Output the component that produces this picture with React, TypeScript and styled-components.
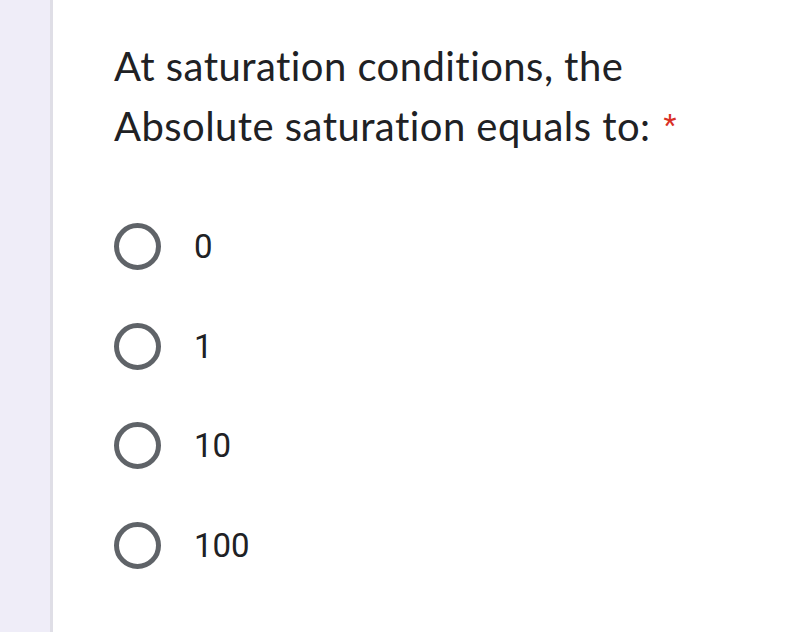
import React from "react";
import styled, { createGlobalStyle } from "styled-components";

const Global = createGlobalStyle`
  html, body { margin: 0; padding: 0; background: #ffffff; }
  #root { height: 632px; }
`;

const Page = styled.div`
  display: flex;
  width: 800px;
  height: 632px;
  overflow: hidden;
`;

const SideStrip = styled.div`
  width: 50px;
  flex: none;
  background: #efedf8;
  border-right: 3px solid #dfdee6;
`;

const Card = styled.div`
  flex: 1;
  background: #ffffff;
  padding: 36px 0 0 61px;
  display: flex;
  flex-direction: column;
`;

const Title = styled.div`
  font-family: Lato, "Open Sans", sans-serif;
  font-size: 40px;
  line-height: 60px;
  letter-spacing: 0.45px;
  font-variant-ligatures: none;
  color: #202124;
  width: 600px;
`;

const Required = styled.span`
  font-family: Roboto, "Liberation Sans", sans-serif;
  color: #d93025;
  font-size: 30px;
  line-height: 0;
  margin-left: 13px;
  vertical-align: 6px;
`;

const Options = styled.div`
  margin-top: 41px;
  display: flex;
  flex-direction: column;
`;

const Option = styled.label`
  display: flex;
  align-items: center;
  height: 99.5px;
`;

const Radio = styled.span`
  box-sizing: border-box;
  width: 47px;
  height: 47px;
  border-radius: 50%;
  border: 5px solid #5f6368;
  flex: none;
`;

const Label = styled.span`
  font-family: Roboto, "Liberation Sans", sans-serif;
  font-size: 33px;
  color: #202124;
  margin-left: 33px;
`;

const options = ["0", "1", "10", "100"];

export default function App() {
  return (
    <>
      <Global />
      <Page>
        <SideStrip />
        <Card>
          <Title>
            At saturation conditions, the Absolute saturation equals to:
            <Required>*</Required>
          </Title>
          <Options>
            {options.map((o) => (
              <Option key={o}>
                <Radio />
                <Label>{o}</Label>
              </Option>
            ))}
          </Options>
        </Card>
      </Page>
    </>
  );
}
